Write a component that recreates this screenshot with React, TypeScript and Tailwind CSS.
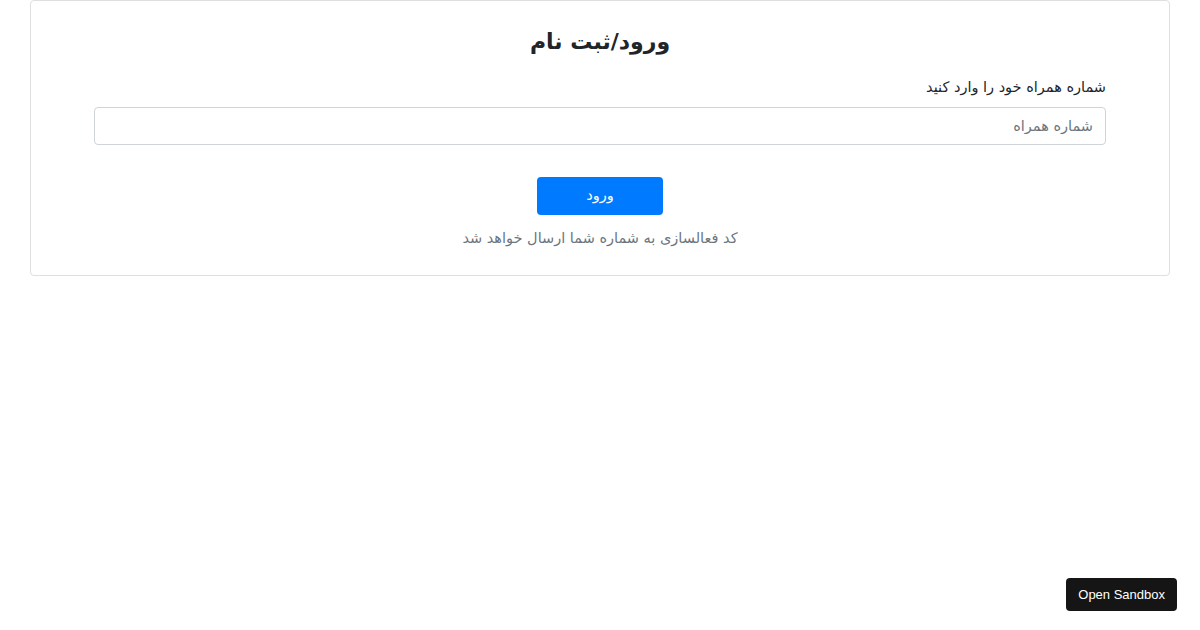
import React from "react";

export default function App() {
  return (
    <div className="min-h-[630px] bg-white relative" style={{ fontFamily: '"DejaVu Sans", sans-serif' }}>
      <div dir="rtl" className="mx-[30px] border border-[#dfdfdf] rounded-[4px] px-[63px] pt-[23px] pb-[25px] text-[#212529]">
        <h3 className="text-center font-bold text-[22px] leading-[36px] mb-[15px]">ورود/ثبت نام</h3>
        <label className="block text-[14.5px] leading-[24px] mb-[8px]">شماره همراه خود را وارد کنید</label>
        <input
          type="text"
          placeholder="شماره همراه"
          className="block w-full h-[38px] border border-[#ced4da] rounded-[4px] px-[12px] text-[14.5px] placeholder:text-[#6c757d] outline-none"
        />
        <div className="flex justify-center mt-[32px]">
          <button className="w-[126px] h-[38px] rounded-[4px] bg-[#007bff] text-white text-[14.5px] font-normal">ورود</button>
        </div>
        <p className="text-center text-[14.5px] leading-[24px] text-[#6c757d] mt-[11px]">کد فعالسازی به شماره شما ارسال خواهد شد</p>
      </div>
      <div className="absolute right-[23px] bottom-[19px] h-[33px] px-[12px] flex items-center rounded-[4px] bg-[#151515] text-white text-[13px]" style={{ fontFamily: '"Liberation Sans", Arial, sans-serif' }}>
        Open Sandbox
      </div>
    </div>
  );
}
